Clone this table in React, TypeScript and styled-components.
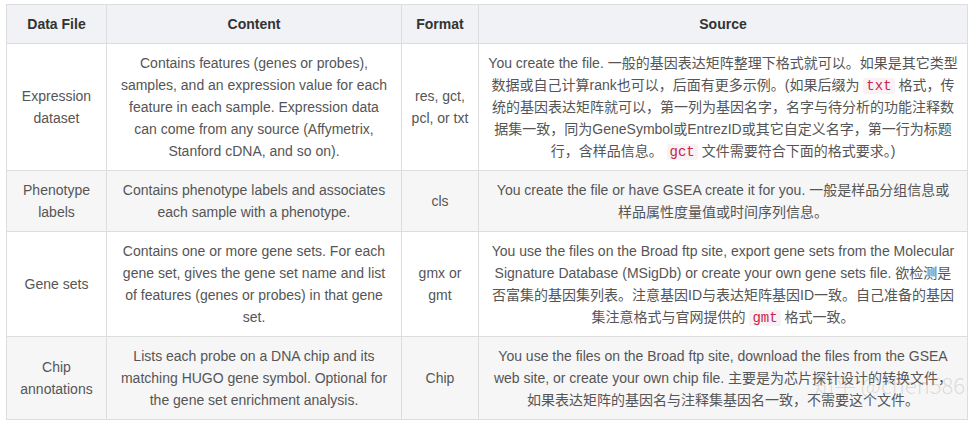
import React from "react";
import styled, { createGlobalStyle } from "styled-components";

const GlobalStyle = createGlobalStyle`
  body {
    margin: 0;
    background: #ffffff;
    font-family: "Liberation Sans", Arial, "Noto Sans CJK SC", sans-serif;
  }
`;

const Page = styled.div`
  position: relative;
  padding: 4px 11px 0 6px;
`;

const Table = styled.table`
  width: 962px;
  border-collapse: collapse;
  table-layout: fixed;
  color: #555555;
  font-size: 14px;
  line-height: 22px;
`;

const Th = styled.th`
  background: #f0f2f5;
  border: 1px solid #dddddd;
  color: #333333;
  font-weight: 700;
  text-align: center;
  padding: 8px 4px;
  height: 22px;
`;

const Tr = styled.tr<{ $striped: boolean }>`
  background: ${(p) => (p.$striped ? "#f6f6f7" : "#ffffff")};
`;

const Td = styled.td`
  border: 1px solid #dddddd;
  text-align: center;
  vertical-align: middle;
  padding: 8px 2px;
  white-space: nowrap;
`;

const Code = styled.code`
  font-family: "Liberation Mono", "Courier New", monospace;
  font-size: 14px;
  line-height: 1;
  color: #c7254e;
  background: #f9f2f4;
  padding: 0 3px;
  border-radius: 2px;
`;

const Watermark = styled.div`
  position: absolute;
  left: 812px;
  top: 369px;
  font-family: "Noto Sans CJK SC", "DejaVu Sans", sans-serif;
  font-size: 22px;
  line-height: 30px;
  font-weight: 300;
  color: rgba(150, 150, 150, 0.3);
  white-space: nowrap;
  pointer-events: none;
`;

type Row = {
  file: React.ReactNode;
  content: React.ReactNode;
  format: React.ReactNode;
  source: React.ReactNode;
};

const rows: Row[] = [
  {
    file: (
      <>
        Expression
        <br />
        dataset
      </>
    ),
    content: (
      <>
        Contains features (genes or probes),
        <br />
        samples, and an expression value for each
        <br />
        feature in each sample. Expression data
        <br />
        can come from any source (Affymetrix,
        <br />
        Stanford cDNA, and so on).
      </>
    ),
    format: (
      <>
        res, gct,
        <br />
        pcl, or txt
      </>
    ),
    source: (
      <>
        You create the file. 一般的基因表达矩阵整理下格式就可以。如果是其它类型
        <br />
        数据或自己计算rank也可以，后面有更多示例。(如果后缀为 <Code>txt</Code> 格式，传
        <br />
        统的基因表达矩阵就可以，第一列为基因名字，名字与待分析的功能注释数
        <br />
        据集一致，同为GeneSymbol或EntrezID或其它自定义名字，第一行为标题
        <br />
        行，含样品信息。 <Code>gct</Code> 文件需要符合下面的格式要求。)
      </>
    ),
  },
  {
    file: (
      <>
        Phenotype
        <br />
        labels
      </>
    ),
    content: (
      <>
        Contains phenotype labels and associates
        <br />
        each sample with a phenotype.
      </>
    ),
    format: "cls",
    source: (
      <>
        You create the file or have GSEA create it for you. 一般是样品分组信息或
        <br />
        样品属性度量值或时间序列信息。
      </>
    ),
  },
  {
    file: "Gene sets",
    content: (
      <>
        Contains one or more gene sets. For each
        <br />
        gene set, gives the gene set name and list
        <br />
        of features (genes or probes) in that gene
        <br />
        set.
      </>
    ),
    format: (
      <>
        gmx or
        <br />
        gmt
      </>
    ),
    source: (
      <>
        You use the files on the Broad ftp site, export gene sets from the Molecular
        <br />
        Signature Database (MSigDb) or create your own gene sets file. 欲检测是
        <br />
        否富集的基因集列表。注意基因ID与表达矩阵基因ID一致。自己准备的基因
        <br />
        集注意格式与官网提供的 <Code>gmt</Code> 格式一致。
      </>
    ),
  },
  {
    file: (
      <>
        Chip
        <br />
        annotations
      </>
    ),
    content: (
      <>
        Lists each probe on a DNA chip and its
        <br />
        matching HUGO gene symbol. Optional for
        <br />
        the gene set enrichment analysis.
      </>
    ),
    format: "Chip",
    source: (
      <>
        You use the files on the Broad ftp site, download the files from the GSEA
        <br />
        web site, or create your own chip file. 主要是为芯片探针设计的转换文件，
        <br />
        如果表达矩阵的基因名与注释集基因名一致，不需要这个文件。
      </>
    ),
  },
];

export default function App() {
  return (
    <Page>
      <GlobalStyle />
      <Table>
        <colgroup>
          <col style={{ width: 100 }} />
          <col style={{ width: 295 }} />
          <col style={{ width: 77 }} />
          <col />
        </colgroup>
        <thead>
          <tr>
            <Th>Data File</Th>
            <Th>Content</Th>
            <Th>Format</Th>
            <Th>Source</Th>
          </tr>
        </thead>
        <tbody>
          {rows.map((r, i) => (
            <Tr key={i} $striped={i % 2 === 1}>
              <Td>{r.file}</Td>
              <Td>{r.content}</Td>
              <Td>{r.format}</Td>
              <Td>{r.source}</Td>
            </Tr>
          ))}
        </tbody>
      </Table>
      <Watermark>知乎 @chen586</Watermark>
    </Page>
  );
}
